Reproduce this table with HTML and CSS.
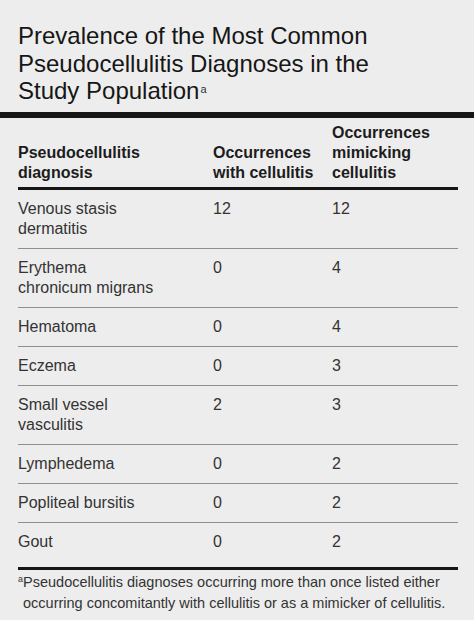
FILE: index.html
```html
<!DOCTYPE html>
<html lang="en">
<head>
<meta charset="utf-8">
<title>Prevalence of the Most Common Pseudocellulitis Diagnoses</title>
<link rel="stylesheet" href="styles.css">
</head>
<body>
<div class="page">
  <h1 class="title">Prevalence of the Most Common Pseudocellulitis Diagnoses in the Study Population<sup class="title-sup">a</sup></h1>
  <div class="bar"></div>
  <table class="data">
    <colgroup>
      <col class="c1"><col class="c2"><col class="c3">
    </colgroup>
    <thead>
      <tr>
        <th>Pseudocellulitis<br>diagnosis</th>
        <th>Occurrences<br>with cellulitis</th>
        <th>Occurrences<br>mimicking<br>cellulitis</th>
      </tr>
    </thead>
    <tbody>
      <tr><td>Venous stasis<br>dermatitis</td><td>12</td><td>12</td></tr>
      <tr><td>Erythema<br>chronicum migrans</td><td>0</td><td>4</td></tr>
      <tr><td>Hematoma</td><td>0</td><td>4</td></tr>
      <tr><td>Eczema</td><td>0</td><td>3</td></tr>
      <tr><td>Small vessel<br>vasculitis</td><td>2</td><td>3</td></tr>
      <tr><td>Lymphedema</td><td>0</td><td>2</td></tr>
      <tr><td>Popliteal bursitis</td><td>0</td><td>2</td></tr>
      <tr class="last"><td>Gout</td><td>0</td><td>2</td></tr>
    </tbody>
  </table>
  <p class="note"><sup class="note-sup">a</sup>Pseudocellulitis diagnoses occurring more than once listed either occurring concomitantly with cellulitis or as a mimicker of cellulitis.</p>
</div>
</body>
</html>
```
FILE: styles.css
```css
html, body {
  margin: 0;
  padding: 0;
  background: #ededed;
}
body {
  font-family: "Liberation Sans", Arial, sans-serif;
  color: #2e2e2e;
}
.page {
  width: 474px;
  height: 620px;
  overflow: hidden;
  background: #ededed;
}
.title {
  margin: 0;
  padding: 22px 0 0 18px;
  max-width: 400px;
  font-size: 24px;
  line-height: 27.5px;
  font-weight: normal;
  color: #161616;
}
.title-sup {
  font-size: 11px;
  vertical-align: 6px;
  line-height: 0;
  margin-left: 1px;
  color: #333;
}
.bar {
  margin-top: 7px;
  height: 6px;
  background: #161616;
}
.data {
  margin-left: 18px;
  width: 440px;
  border-collapse: separate;
  border-spacing: 0;
  table-layout: fixed;
  font-size: 16px;
  line-height: 20px;
}
.c1 { width: 195px; }
.c2 { width: 119px; }
.c3 { width: 126px; }
.data th {
  text-align: left;
  vertical-align: bottom;
  font-weight: bold;
  color: #1c1c1c;
  padding: 5px 0 4px 0;
  border-bottom: 3px solid #161616;
  white-space: nowrap;
}
.data td {
  text-align: left;
  vertical-align: top;
  padding: 9px 0;
  border-bottom: 1px solid #8f8f8f;
  color: #333;
  white-space: nowrap;
}
.data tr.last td {
  padding-bottom: 15px;
  border-bottom: 3px solid #161616;
}
.note {
  margin: 0 0 0 18px;
  width: 442px;
  padding: 2px 0 0 5px;
  text-indent: -5px;
  box-sizing: border-box;
  font-size: 14.5px;
  line-height: 21px;
  color: #333;
}
.note-sup {
  font-size: 9px;
  vertical-align: 5px;
  line-height: 0;
}
```
